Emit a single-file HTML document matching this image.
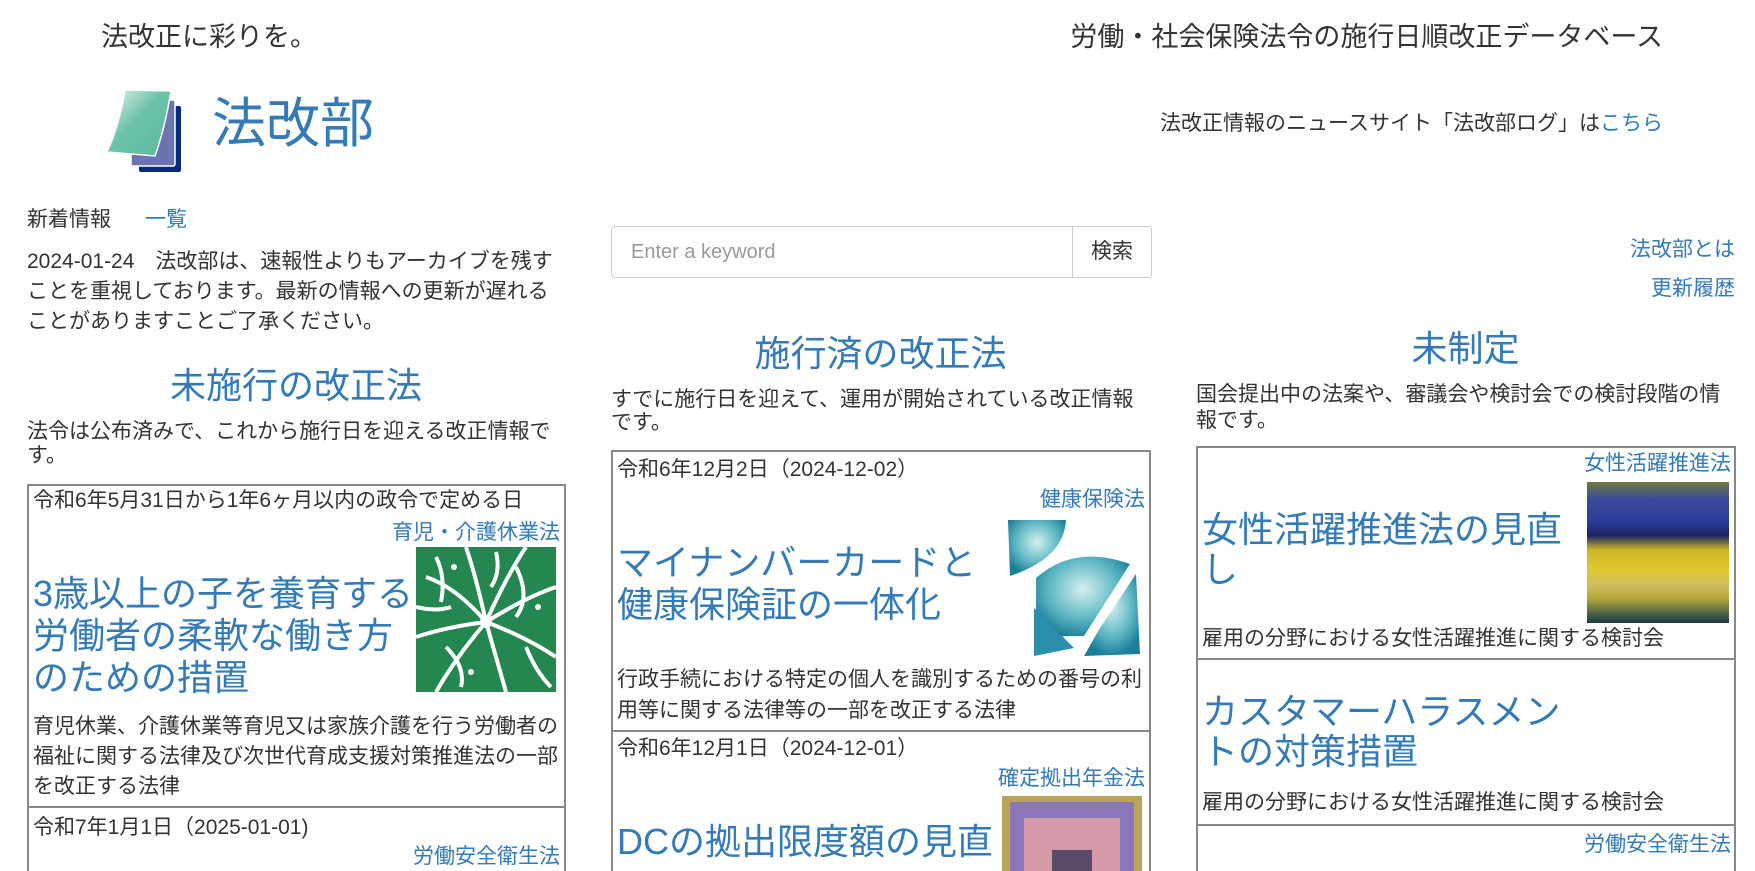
<!DOCTYPE html>
<html><head><meta charset="utf-8"><style>
*{margin:0;padding:0;box-sizing:border-box}
html{width:1755px;height:871px;overflow:hidden}
body{width:1755px;height:871px;overflow:hidden;background:#fff;color:#333;font-family:"Liberation Sans","Noto Sans CJK JP",sans-serif;font-size:21px;position:relative}
.a{position:absolute;white-space:nowrap}
.l{color:#337ab7}
.box{position:absolute;border:2px solid #888;background:#fff}
.open{border-bottom:none}
.t{font-size:36px;line-height:42px;color:#337ab7}
h2{font-weight:normal;font-size:36px;color:#337ab7;position:absolute;text-align:center;line-height:40px}
</style></head><body>
<div class="a" style="left:101px;top:21px;font-size:27px;line-height:32px">法改正に彩りを。</div>
<div class="a" style="right:92px;top:21px;font-size:27px;line-height:32px">労働・社会保険法令の施行日順改正データベース</div>
<svg class="a" style="left:105px;top:88px" width="86" height="88" viewBox="0 0 86 88">
<rect x="34" y="18" width="42" height="66" rx="2" fill="#0a2a80"/>
<rect x="26" y="12" width="44" height="66" rx="2" fill="#6b74b0" stroke="#fff" stroke-width="1.5"/>
<defs><linearGradient id="g" x1="0" y1="0" x2="1" y2="1"><stop offset="0" stop-color="#eaf6f1"/><stop offset="0.45" stop-color="#6cc3aa"/><stop offset="1" stop-color="#5bb89c"/></linearGradient></defs>
<path d="M20 2 L66 3 Q60 40 50 68 L2 64 Q14 38 20 2Z" fill="url(#g)" stroke="#fff" stroke-width="1.5"/>
</svg>
<div class="a l" style="left:212px;top:93px;font-size:54px;line-height:62px">法改部</div>
<div class="a" style="right:92px;top:110px;line-height:28px">法改正情報のニュースサイト「法改部ログ」は<span class="l">こちら</span></div>

<div class="a" style="left:27px;top:206px;line-height:28px">新着情報</div>
<div class="a l" style="left:145px;top:206px;line-height:28px">一覧</div>
<div class="a" style="left:27px;top:247px;line-height:30px">2024-01-24　法改部は、速報性よりもアーカイブを残す<br>ことを重視しております。最新の情報への更新が遅れる<br>ことがありますことご了承ください。</div>
<h2 style="left:27px;width:538px;top:366px">未施行の改正法</h2>
<div class="a" style="left:27px;top:420px;line-height:24px">法令は公布済みで、これから施行日を迎える改正情報で<br>す。</div>

<div class="box" style="left:27px;top:484px;width:539px;height:325px"></div>
<div class="a" style="left:33px;top:487px;line-height:28px">令和6年5月31日から1年6ヶ月以内の政令で定める日</div>
<div class="a l" style="right:1195px;top:519px;line-height:28px">育児・介護休業法</div>
<svg class="a" style="left:416px;top:547px" width="140" height="145" viewBox="0 0 140 145"><rect width="140" height="145" fill="#23874f"/>
<g fill="none" stroke="#fff" stroke-width="4"><path d="M70 75 Q40 40 10 30"/><path d="M70 75 Q60 30 50 0"/><path d="M70 75 Q90 30 110 0"/><path d="M70 75 Q110 50 140 40"/><path d="M70 75 Q110 90 140 110"/><path d="M70 75 Q80 110 90 145"/><path d="M70 75 Q40 110 20 145"/><path d="M70 75 Q30 80 0 90"/><path d="M20 10 Q30 30 25 55"/><path d="M100 20 Q115 50 100 70"/><path d="M30 100 Q50 120 45 140"/><path d="M110 100 Q120 125 135 140"/><path d="M0 60 Q20 65 35 60"/><path d="M80 5 Q85 25 75 40"/></g>
<g fill="#fff"><circle cx="70" cy="75" r="6"/><circle cx="38" cy="20" r="3"/><circle cx="122" cy="60" r="3"/><circle cx="55" cy="125" r="3"/></g></svg>
<div class="a t" style="left:33px;top:573px">3歳以上の子を養育する<br>労働者の柔軟な働き方<br>のための措置</div>
<div class="a" style="left:33px;top:712px;line-height:30px">育児休業、介護休業等育児又は家族介護を行う労働者の<br>福祉に関する法律及び次世代育成支援対策推進法の一部<br>を改正する法律</div>
<div class="box open" style="left:27px;top:806px;width:539px;height:70px"></div>
<div class="a" style="left:33px;top:814px;line-height:28px">令和7年1月1日（2025-01-01)</div>
<div class="a l" style="right:1195px;top:843px;line-height:28px">労働安全衛生法</div>

<div class="a" style="left:611px;top:226px;width:462px;height:52px;border:1px solid #ccc;border-radius:4px 0 0 4px;color:#999;padding:14px 0 0 19px;line-height:22px;font-size:20px">Enter a keyword</div>
<div class="a" style="left:1072px;top:226px;width:80px;height:52px;border:1px solid #ccc;border-radius:0 4px 4px 0;text-align:center;line-height:50px">検索</div>
<h2 style="left:611px;width:539px;top:334px">施行済の改正法</h2>
<div class="a" style="left:611px;top:388px;line-height:23px">すでに施行日を迎えて、運用が開始されている改正情報<br>です。</div>

<div class="box" style="left:611px;top:450px;width:540px;height:283px"></div>
<div class="a" style="left:617px;top:456px;line-height:28px">令和6年12月2日（2024-12-02）</div>
<div class="a l" style="right:610px;top:486px;line-height:28px">健康保険法</div>
<svg class="a" style="left:1004px;top:518px" width="138" height="140" viewBox="0 0 138 140"><defs><radialGradient id="w" cx="0.5" cy="0.4" r="0.6"><stop offset="0" stop-color="#d6f0ef"/><stop offset="0.6" stop-color="#5fb8c4"/><stop offset="1" stop-color="#1b7f99"/></radialGradient></defs>
<path d="M4 2 L62 2 Q60 40 6 58Z" fill="url(#w)"/><path d="M32 60 Q70 26 126 46 L80 118 Q50 118 32 120Z" fill="url(#w)"/><path d="M30 90 L70 130 L30 138Z" fill="#2b8eaa"/><path d="M132 56 L136 136 L80 138 L96 110Z" fill="url(#w)"/></svg>
<div class="a t" style="left:617px;top:542px">マイナンバーカードと<br>健康保険証の一体化</div>
<div class="a" style="left:617px;top:664px;line-height:31px">行政手続における特定の個人を識別するための番号の利<br>用等に関する法律等の一部を改正する法律</div>
<div class="box open" style="left:611px;top:730px;width:540px;height:145px"></div>
<div class="a" style="left:617px;top:735px;line-height:28px">令和6年12月1日（2024-12-01）</div>
<div class="a l" style="right:610px;top:765px;line-height:28px">確定拠出年金法</div>
<svg class="a" style="left:1002px;top:796px" width="140" height="75" viewBox="0 0 140 75"><rect width="140" height="75" fill="#b9a45a"/><rect x="8" y="6" width="124" height="75" fill="#8a76b8"/><rect x="22" y="22" width="96" height="60" fill="#d59aa8"/><rect x="50" y="54" width="40" height="30" fill="#5a4a6a"/></svg>
<div class="a t" style="left:617px;top:821px">DCの拠出限度額の見直</div>

<div class="a l" style="right:20px;top:236px;line-height:28px">法改部とは</div>
<div class="a l" style="right:20px;top:275px;line-height:28px">更新履歴</div>
<h2 style="left:1196px;width:539px;top:329px">未制定</h2>
<div class="a" style="left:1196px;top:382px;line-height:26px">国会提出中の法案や、審議会や検討会での検討段階の情<br>報です。</div>

<div class="box" style="left:1196px;top:446px;width:540px;height:215px"></div>
<div class="a l" style="right:24px;top:450px;line-height:28px">女性活躍推進法</div>
<div class="a" style="left:1587px;top:482px;width:142px;height:141px;background:linear-gradient(180deg,#6f7a3a 0%,#3b4a9a 12%,#2a3d9a 28%,#1d2360 38%,#c9b52a 48%,#e3c82a 62%,#d0c060 72%,#b8a838 82%,#3b5a4a 95%,#1c3a40 100%)"></div>
<div class="a t" style="left:1202px;top:510px;line-height:40px">女性活躍推進法の見直<br>し</div>
<div class="a" style="left:1202px;top:625px;line-height:28px">雇用の分野における女性活躍推進に関する検討会</div>
<div class="box" style="left:1196px;top:658px;width:540px;height:169px"></div>
<div class="a t" style="left:1202px;top:692px;line-height:40px">カスタマーハラスメン<br>トの対策措置</div>
<div class="a" style="left:1202px;top:789px;line-height:28px">雇用の分野における女性活躍推進に関する検討会</div>
<div class="box open" style="left:1196px;top:824px;width:540px;height:50px"></div>
<div class="a l" style="right:24px;top:831px;line-height:28px">労働安全衛生法</div>
</body></html>
